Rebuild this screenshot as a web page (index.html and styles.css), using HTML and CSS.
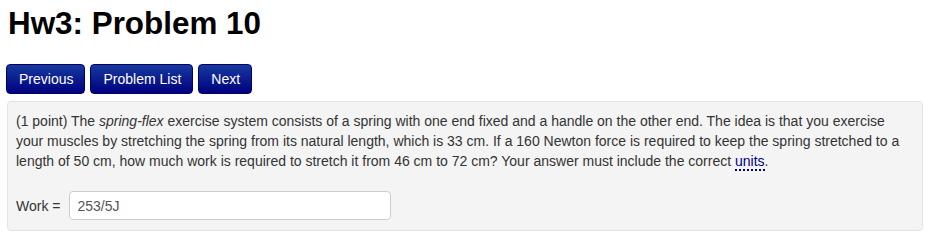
FILE: index.html
```html
<!DOCTYPE html>
<html>
	<head>
		<meta charset="utf-8">
		<title>Hw3: Problem 10</title>
		<link rel="stylesheet" href="styles.css">
	</head>
	<body>
		<div class="wrap">
			<h1 class="title">Hw3: Problem 10</h1>
			<div class="nav">
				<a href="javascript:void(0)" class="btn">Previous</a>
				<a href="javascript:void(0)" class="btn">Problem List</a>
				<a href="javascript:void(0)" class="btn">Next</a>
			</div>
			<div class="problem">
				<p>(1 point) The <i>spring-flex</i> exercise system consists of a spring with one end fixed and a handle on the other end. The idea is that you exercise your muscles by stretching the spring from its natural length, which is 33 cm. If a 160 Newton force is required to keep the spring stretched to a length of 50 cm, how much work is required to stretch it from 46 cm to 72 cm? Your answer must include the correct <a href="javascript:void(0)" class="units">units</a>.</p>
				<div class="answer">
					<span>Work =</span>
					<input type="text" value="253/5J">
				</div>
			</div>
		</div>
	</body>
</html>
```

FILE: styles.css
```css
*{margin:0;padding:0;box-sizing:border-box;}
body{font-family:"Liberation Sans",Arial,sans-serif;font-size:14px;color:#333;background:#fff;}
a{text-decoration:none;}
div.wrap{padding:0 15px 0 7px;}
h1.title{font-size:31.4px;font-weight:bold;color:#000;line-height:36px;padding:6px 0 0 1px;height:64px;}
div.nav{display:flex;gap:5px;height:37px;margin-left:-1px;}
a.btn{display:inline-block;height:30px;line-height:28px;padding:0 11px 0 12px;color:#fff;font-size:14px;border:1px solid #000066;border-radius:4px;background:linear-gradient(#163a9e,#00007f);}
div.problem{background:#f4f4f4;border:1px solid #e3e3e3;border-radius:4px;padding:9px 8px 10px 8px;}
div.problem>p{line-height:20px;margin-bottom:20px;}
a.units{color:#00008b;border-bottom:2px dotted #00008b;}
div.answer{display:flex;align-items:center;gap:9px;}
div.answer>input{width:322px;height:29px;border:1px solid #ccc;border-radius:4px;background:#fff;font-family:"Liberation Sans",Arial,sans-serif;font-size:14px;color:#555;padding:0 7px;}
```
